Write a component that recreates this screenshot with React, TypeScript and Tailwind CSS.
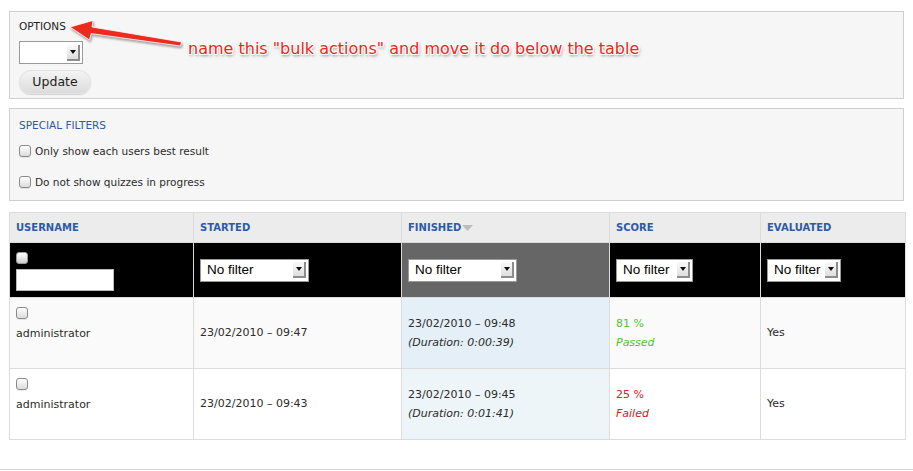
import React from 'react'

function Checkbox({ dark = false }: { dark?: boolean }) {
  return (
    <span
      className={`block shrink-0 w-[12px] h-[12px] rounded-[3px] border ${dark ? 'border-[#999] bg-linear-to-b from-white to-[#cfcfcf]' : 'border-[#8a8a8a] bg-linear-to-b from-white to-[#dcdcdc]'} shadow-[0_1px_0_rgba(0,0,0,0.08)]`}
    />
  )
}

function FakeSelect({ label, width }: { label: string; width: string }) {
  return (
    <div className={`${width} h-[23px] bg-white border border-[#9a9a9a] flex items-center justify-between pl-[6px] pr-[2px]`}>
      <span className="font-['Liberation_Sans'] text-[13.5px] text-black">{label}</span>
      <span className="w-[13px] h-[16px] bg-linear-to-b from-[#fafafa] to-[#dedede] border-r-2 border-b-2 border-[#8c8c8c] flex items-center justify-center">
        <svg width="6" height="4" viewBox="0 0 6 4">
          <path d="M0 0H6L3 4Z" fill="#111" />
        </svg>
      </span>
    </div>
  )
}

const rows = [
  {
    user: 'administrator',
    started: '23/02/2010 – 09:47',
    finished: '23/02/2010 – 09:48',
    duration: '(Duration: 0:00:39)',
    score: '81 %',
    result: 'Passed',
    pass: true,
    bg: 'bg-[#fafafa]',
    finBg: 'bg-[#e4eff7]',
  },
  {
    user: 'administrator',
    started: '23/02/2010 – 09:43',
    finished: '23/02/2010 – 09:45',
    duration: '(Duration: 0:01:41)',
    score: '25 %',
    result: 'Failed',
    pass: false,
    bg: 'bg-white',
    finBg: 'bg-[#edf5f9]',
  },
]

export default function App() {
  return (
    <div className="relative w-[913px] h-[471px] bg-white font-['DejaVu_Sans',sans-serif] text-[10.5px] text-[#2b2b2b] overflow-hidden">
      <div className="px-[9px] pt-[11px]">
        {/* options */}
        <div className="h-[88px] border border-[#cfcfcf] bg-[#f6f6f6] px-[9px] pt-[7px]">
          <div className="text-[10.5px] text-[#222] leading-[14px]">OPTIONS</div>
          <div className="mt-[8px]">
            <FakeSelect label="" width="w-[64px]" />
          </div>
          <button className="mt-[6px] w-[72px] h-[24px] rounded-[12px] bg-linear-to-b from-[#f4f4f4] to-[#dcdcdc] border border-[#e2e2e2] shadow-[0_1px_1px_rgba(0,0,0,0.15)] text-[12.5px] text-[#222]">
            Update
          </button>
        </div>

        {/* special filters */}
        <div className="mt-[9px] h-[93px] border border-[#cfcfcf] bg-[#f6f6f6] px-[9px] pt-[9px]">
          <div className="text-[#2c5aa8] leading-[14px]">SPECIAL FILTERS</div>
          <label className="mt-[12px] flex items-center gap-[4px] leading-[14px]">
            <Checkbox />
            <span>Only show each users best result</span>
          </label>
          <label className="mt-[17px] flex items-center gap-[4px] leading-[14px]">
            <Checkbox />
            <span>Do not show quizzes in progress</span>
          </label>
        </div>

        {/* results table */}
        <table className="mt-[11px] w-[896px] border-collapse table-fixed text-[11px]">
          <colgroup>
            <col className="w-[184px]" />
            <col className="w-[208px]" />
            <col className="w-[208px]" />
            <col className="w-[151px]" />
            <col className="w-[145px]" />
          </colgroup>
          <thead>
            <tr className="h-[30px] bg-[#ececec] text-left">
              {['USERNAME', 'STARTED', 'FINISHED', 'SCORE', 'EVALUATED'].map((h) => (
                <th key={h} className="border border-[#dcdcdc] px-[6px] font-bold text-[10px] text-[#2c5aa8] align-middle">
                  <span className="inline-flex items-center">
                    {h}
                    {h === 'FINISHED' && (
                      <svg width="11" height="6" viewBox="0 0 11 6" className="ml-[1px]">
                        <path d="M0 0H11L5.5 6Z" fill="#bdbdbd" />
                      </svg>
                    )}
                  </span>
                </th>
              ))}
            </tr>
          </thead>
          <tbody>
            <tr className="h-[55px] bg-black">
              <td className="border-x border-[#dcdcdc] px-[6px] align-top pt-[9px]">
                <div className="flex flex-col gap-[5px]">
                  <Checkbox dark />
                  <div className="w-[98px] h-[22px] bg-white border border-[#bbb]" />
                </div>
              </td>
              <td className="border-x border-[#dcdcdc] px-[6px]">
                <FakeSelect label="No filter" width="w-[109px]" />
              </td>
              <td className="border-x border-[#dcdcdc] px-[6px] bg-[#666]">
                <FakeSelect label="No filter" width="w-[109px]" />
              </td>
              <td className="border-x border-[#dcdcdc] px-[6px]">
                <FakeSelect label="No filter" width="w-[77px]" />
              </td>
              <td className="border-x border-[#dcdcdc] px-[6px]">
                <FakeSelect label="No filter" width="w-[74px]" />
              </td>
            </tr>
            {rows.map((r, i) => (
              <tr key={i} className={`h-[71px] ${r.bg}`}>
                <td className="border border-[#dcdcdc] px-[6px] align-top pt-[9px]">
                  <Checkbox />
                  <div className="mt-[8px] leading-[14px]">{r.user}</div>
                </td>
                <td className="border border-[#dcdcdc] px-[6px]">{r.started}</td>
                <td className={`border border-[#dcdcdc] px-[6px] ${r.finBg}`}>
                  <div className="leading-[19px]">{r.finished}</div>
                  <div className="leading-[19px] italic">{r.duration}</div>
                </td>
                <td className="border border-[#dcdcdc] px-[6px]">
                  <div className={`leading-[19px] ${r.pass ? 'text-[#4fc42f]' : 'text-[#d42020]'}`}>{r.score}</div>
                  <div className={`leading-[19px] italic ${r.pass ? 'text-[#4fc42f]' : 'text-[#d42020]'}`}>{r.result}</div>
                </td>
                <td className="border border-[#dcdcdc] px-[6px]">Yes</td>
              </tr>
            ))}
          </tbody>
        </table>
      </div>

      <div className="mt-[29px] border-t border-[#d6d6d6]" />

      {/* annotation */}
      <svg className="absolute left-0 top-0 drop-shadow-[1px_2px_1px_rgba(0,0,0,0.35)]" width="200" height="60" viewBox="0 0 200 60">
        <polygon points="70,27 93,20.5 92,27 181.5,42 180.5,46 91.2,33.6 89.5,40" fill="#ec2a1e" stroke="#fff" strokeWidth="0.8" />
      </svg>
      <div className="absolute left-[188px] top-[38px] font-['DejaVu_Sans',sans-serif] text-[16px] leading-[22px] text-[#f2231a] whitespace-nowrap [text-shadow:1px_0_0_#fff,-1px_0_0_#fff,0_1px_0_#fff,0_-1px_0_#fff,1px_1px_0_#fff,-1px_-1px_0_#fff,1px_-1px_0_#fff,-1px_1px_0_#fff,1px_2px_3px_rgba(0,0,0,0.55)]">
        name this "bulk actions" and move it do below the table
      </div>
    </div>
  )
}
